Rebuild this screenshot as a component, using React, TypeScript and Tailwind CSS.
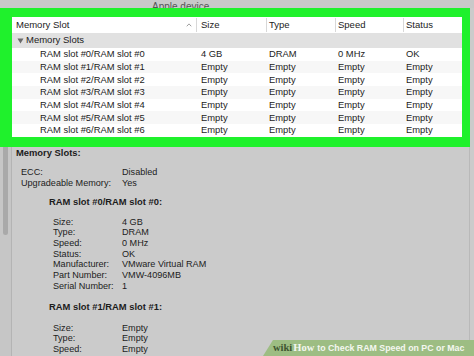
const slots = [0, 1, 2, 3, 4, 5, 6].map((i) =>
  i === 0
    ? { name: `RAM slot #${i}/RAM slot #${i}`, size: '4 GB', type: 'DRAM', speed: '0 MHz', status: 'OK' }
    : { name: `RAM slot #${i}/RAM slot #${i}`, size: 'Empty', type: 'Empty', speed: 'Empty', status: 'Empty' },
);

const summary: [string, string][] = [
  ['ECC:', 'Disabled'],
  ['Upgradeable Memory:', 'Yes'],
];

const slot0: [string, string][] = [
  ['Size:', '4 GB'],
  ['Type:', 'DRAM'],
  ['Speed:', '0 MHz'],
  ['Status:', 'OK'],
  ['Manufacturer:', 'VMware Virtual RAM'],
  ['Part Number:', 'VMW-4096MB'],
  ['Serial Number:', '1'],
];

const slot1: [string, string][] = [
  ['Size:', 'Empty'],
  ['Type:', 'Empty'],
  ['Speed:', 'Empty'],
];

function Pairs({ rows, indent }: { rows: [string, string][]; indent: string }) {
  return (
    <div className={`flex flex-col ${indent}`}>
      {rows.map(([k, v]) => (
        <div key={k} className="flex h-[10.7px] items-center">
          <span className={indent === 'pl-[5px]' ? 'w-[101px]' : 'w-[69px]'}>{k}</span>
          <span>{v}</span>
        </div>
      ))}
    </div>
  );
}

export default function App() {
  return (
    <div
      className="relative h-[356px] w-[474px] overflow-hidden bg-[#cbcbcb] text-[#1c1c1c]"
      style={{ fontFamily: '"Liberation Sans", Arial, sans-serif' }}
    >
      {/* window title strip, mostly under the highlight */}
      <div className="h-[8px] overflow-hidden bg-[#c9c9c9] pl-[152px] text-[10px] leading-[10px] text-[#555]">
        <div className="mt-[2px]">Apple device</div>
      </div>

      {/* highlighted table */}
      <div className="w-[470px] border-b-[10px] border-l-[12px] border-r-[8px] border-t-[9px] border-[#1ff12c] bg-white">
        <div className="flex h-[16px] items-center bg-white text-[9.5px] text-[#222]">
          <div className="flex w-[184px] items-center justify-between pl-[4px] pr-[4px]">
            <span>Memory Slot</span>
            <svg viewBox="0 0 8 5" className="h-[4px] w-[6px]">
              <path d="M1 4.2 4 1 7 4.2" fill="none" stroke="#888" strokeWidth="1.1" />
            </svg>
          </div>
          <div className="h-[14px] w-px bg-[#d8d8d8]" />
          <div className="w-[69px] pl-[4px]">Size</div>
          <div className="h-[14px] w-px bg-[#d8d8d8]" />
          <div className="w-[68px] pl-[2px]">Type</div>
          <div className="h-[14px] w-px bg-[#d8d8d8]" />
          <div className="w-[67px] pl-[2px]">Speed</div>
          <div className="h-[14px] w-px bg-[#d8d8d8]" />
          <div className="flex-1 pl-[2px]">Status</div>
        </div>
        <div className="flex h-[15px] items-center gap-[2px] bg-[#e1e1e1] pl-[5px] text-[9.5px]">
          <svg viewBox="0 0 8 7" className="h-[6px] w-[7px]">
            <path d="M0.5 0.5h7L4 6.5z" fill="#6a6a6a" />
          </svg>
          <span>Memory Slots</span>
        </div>
        {slots.map((s, i) => (
          <div
            key={s.name}
            className={`flex h-[12.7px] items-center text-[9.4px] ${i % 2 ? 'bg-[#f7f7f7]' : 'bg-white'}`}
          >
            <div className="w-[185px] pl-[28px]">{s.name}</div>
            <div className="w-[70px] pl-[4px]">{s.size}</div>
            <div className="w-[69px] pl-[2px]">{s.type}</div>
            <div className="w-[68px] pl-[2px]">{s.speed}</div>
            <div className="flex-1 pl-[2px]">{s.status}</div>
          </div>
        ))}
      </div>

      {/* detail pane */}
      <div className="flex h-[209px]">
        <div className="w-[12px] border-r border-[#b4b4b4] bg-[#c6c6c6] pl-[3px]">
          <div className="h-[88px] w-[5px] rounded-b-full bg-[#a9a9a9]" />
        </div>
        <div className="flex w-[458px] flex-col border-r border-[#b9b9b9] pl-[4px] pt-[1px] text-[9.1px]">
          <div className="flex h-[11px] items-center text-[9.4px] font-bold">Memory Slots:</div>
          <div className="h-[9px]" />
          <Pairs rows={summary} indent="pl-[5px]" />
          <div className="h-[7px]" />
          <div className="flex h-[11px] items-center pl-[33px] text-[9.4px] font-bold">RAM slot #0/RAM slot #0:</div>
          <div className="h-[10px]" />
          <Pairs rows={slot0} indent="pl-[37px]" />
          <div className="h-[10px]" />
          <div className="flex h-[11px] items-center pl-[33px] text-[9.4px] font-bold">RAM slot #1/RAM slot #1:</div>
          <div className="h-[10px]" />
          <Pairs rows={slot1} indent="pl-[37px]" />
        </div>
      </div>

      {/* wikiHow banner */}
      <div className="absolute bottom-0 right-0 flex h-[16px] w-[211px] items-center overflow-hidden">
        <svg viewBox="0 0 211 16" preserveAspectRatio="none" className="absolute inset-0 h-full w-full">
          <polygon points="10,0 211,0 211,16 0,16" fill="#9dbd83" />
        </svg>
        <div className="relative flex items-baseline whitespace-nowrap pl-[10px] text-[8.8px] font-bold text-[#f4f7f0]">
          <span className="text-[#3f5530]" style={{ fontFamily: '"Liberation Serif", serif', fontSize: '10.5px' }}>
            wiki
          </span>
          <span className="ml-[1px] mr-[3px]" style={{ fontFamily: '"Liberation Serif", serif', fontSize: '10.5px' }}>
            How
          </span>
          <span>to Check RAM Speed on PC or Mac</span>
        </div>
      </div>
    </div>
  );
}
